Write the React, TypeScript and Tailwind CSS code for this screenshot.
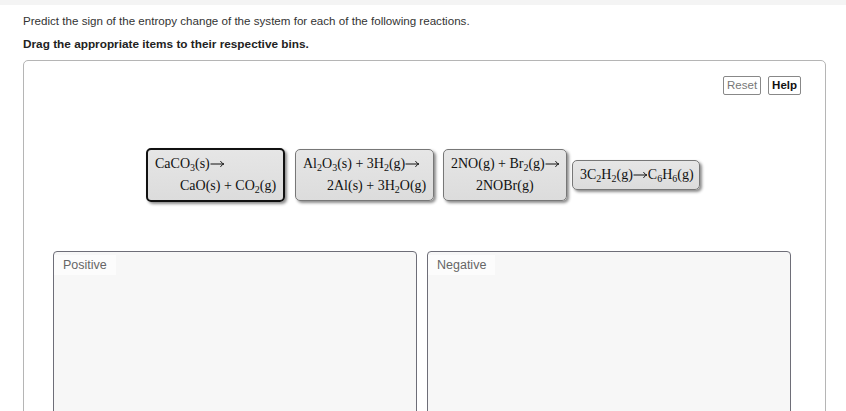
import React from "react";

const S = ({ children }: { children: React.ReactNode }) => (
  <span className="relative top-[3px] text-[10px] leading-none">{children}</span>
);

const A = () => (
  <svg
    width="15"
    height="8"
    viewBox="0 0 15 8"
    className="inline-block align-middle relative top-[-1px]"
  >
    <path d="M0.5 4H13.5" stroke="#111" strokeWidth="1" fill="none" />
    <path
      d="M10.5 1C11.2 2.6 12.4 3.5 14 4C12.4 4.5 11.2 5.4 10.5 7"
      stroke="#111"
      strokeWidth="0.9"
      fill="none"
    />
  </svg>
);

const Card = ({
  lines,
  w,
  selected,
  cls,
}: {
  lines: React.ReactNode[];
  w: string;
  selected?: boolean;
  cls?: string;
}) => (
  <div
    className={`${w} ${cls ?? ""} rounded-[5px] bg-gradient-to-b from-[#e6e6e6] to-[#dcdcdc] px-[7px] py-[3px] shadow-[2px_2px_3px_rgba(0,0,0,0.45)] ${
      selected ? "border-2 border-[#111]" : "border border-[#777]"
    }`}
    style={{ fontFamily: '"Liberation Serif", "DejaVu Serif", serif' }}
  >
    {lines.map((l, i) => (
      <div key={i} className="text-[14px] leading-[22px] text-[#111] whitespace-nowrap">
        {l}
      </div>
    ))}
  </div>
);

export default function App() {
  return (
    <div
      className="w-[846px] h-[411px] overflow-hidden bg-white text-[#333]"
      style={{ fontFamily: '"Liberation Sans", Arial, sans-serif' }}
    >
      <div className="h-[5px] bg-[#f4f4f4]" />
      <div className="pl-[23px] pt-[9px] text-[11.6px] leading-[14px]">
        Predict the sign of the entropy change of the system for each of the following reactions.
      </div>
      <div className="pl-[23px] pt-[9px] text-[11.8px] leading-[14px] font-bold text-[#222]">
        Drag the appropriate items to their respective bins.
      </div>
      <div className="ml-[23px] mt-[9px] w-[803px] h-[400px] rounded-[5px] border border-[#b5b5b5]">
        <div className="flex justify-end gap-[7px] pt-[15px] pr-[24px]">
          <button className="h-[19px] px-[3px] text-[11.5px] leading-[17px] text-[#777] border border-[#888] rounded-[2px] bg-white">
            Reset
          </button>
          <button className="h-[19px] px-[3px] text-[11.5px] leading-[17px] font-bold text-[#111] border border-[#888] rounded-[2px] bg-white">
            Help
          </button>
        </div>
        <div className="flex items-center justify-center mt-[53px] pr-[3px]">
          <Card
            w="w-[139px]"
            selected
            lines={[
              <>CaCO<S>3</S>(s)<A /></>,
              <span className="pl-[25px]">CaO(s) + CO<S>2</S>(g)</span>,
            ]}
          />
          <Card
            w="w-[139px]"
            cls="ml-[10px]"
            lines={[
              <>Al<S>2</S>O<S>3</S>(s) + 3H<S>2</S>(g)<A /></>,
              <span className="pl-[24px]">2Al(s) + 3H<S>2</S>O(g)</span>,
            ]}
          />
          <Card
            w="w-[124px]"
            cls="ml-[9px]"
            lines={[
              <>2NO(g) + Br<S>2</S>(g)<A /></>,
              <span className="pl-[25px]">2NOBr(g)</span>,
            ]}
          />
          <Card
            w="w-[128px]"
            cls="ml-[5px]"
            lines={[<>3C<S>2</S>H<S>2</S>(g)<A />C<S>6</S>H<S>6</S>(g)</>]}
          />
        </div>
        <div className="flex gap-[10px] pl-[29px] mt-[49px]">
          {["Positive", "Negative"].map((t) => (
            <div
              key={t}
              className="w-[364px] h-[200px] rounded-[4px] border border-[#6e6e78] bg-[#f7f7f7]"
            >
              <div className="inline-block bg-[#fcfcfc] px-[9px] pt-[3px] pb-[3px] text-[12.5px] leading-[14px] text-[#666]">
                {t}
              </div>
            </div>
          ))}
        </div>
      </div>
    </div>
  );
}
